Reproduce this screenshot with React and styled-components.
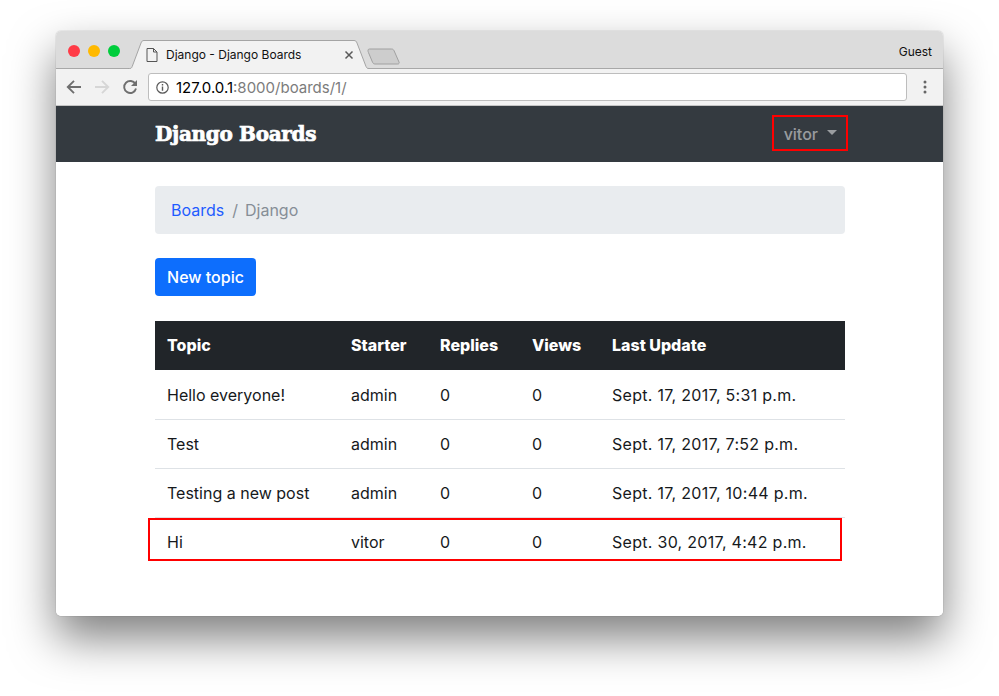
import React from "react";
import styled, { createGlobalStyle } from "styled-components";

const Global = createGlobalStyle`
  html, body { margin: 0; background: #fff; }
  body { font-family: Inter, "Liberation Sans", sans-serif; overflow: hidden; }
  #root { padding: 31px 56px 0; width: 887px; height: 665px; }
`;

const Window = styled.div`
  width: 887px;
  height: 585px;
  border-radius: 5px;
  background: #fff;
  overflow: hidden;
`;
const WindowShadow = styled.div`
  width: 887px;
  height: 585px;
  border-radius: 5px;
  box-shadow: 0 22px 45px rgba(0, 0, 0, 0.5), 0 0 1px rgba(0, 0, 0, 0.5);
`;
const TitleBar = styled.div`
  height: 37px;
  background: #dcdcdc;
  border-bottom: 1px solid #a8a8a8;
  display: flex;
  align-items: flex-start;
  position: relative;
`;
const Lights = styled.div`
  display: flex;
  gap: 8px;
  padding: 14px 0 0 12px;
  width: 60px;
`;
const Light = styled.span`
  width: 12px;
  height: 12px;
  border-radius: 50%;
  background: ${(p) => p.$c};
`;
const Tab = styled.div`
  position: relative;
  width: 242px;
  height: 29px;
  margin-top: 9px;
  display: flex;
  align-items: center;
  padding: 0 0 0 18px;
  box-sizing: border-box;
  flex: none;
`;
const TabShape = styled.svg`
  position: absolute;
  left: 0;
  top: 0;
`;
const TabIcon = styled.svg`
  position: relative;
  flex: none;
  margin-right: 8px;
`;
const TabTitle = styled.span`
  position: relative;
  font-size: 12px;
  color: #111;
  width: 178px;
  white-space: nowrap;
`;
const TabClose = styled.svg`
  position: relative;
  flex: none;
`;
const NewTab = styled.svg`
  flex: none;
  margin: 17px 0 0 -3px;
`;
const Guest = styled.span`
  margin: 13px 11px 0 auto;
  font-size: 12px;
  color: #111;
`;
const ToolBar = styled.div`
  height: 36px;
  background: #f2f2f2;
  border-bottom: 1px solid #c4c4c4;
  display: flex;
  align-items: center;
`;
const NavIcons = styled.div`
  display: flex;
  align-items: center;
  gap: 12px;
  padding-left: 10px;
  width: 82px;
  flex: none;
`;
const AddressBar = styled.div`
  width: 759px;
  height: 28px;
  background: #fff;
  border: 1px solid #bdbdbd;
  border-radius: 3px;
  display: flex;
  align-items: center;
  padding-left: 7px;
  gap: 7px;
  flex: none;
  font-size: 15px;
  box-sizing: border-box;
`;
const Host = styled.span`
  color: #000;
`;
const Path = styled.span`
  color: #7c7c7c;
`;
const Kebab = styled.svg`
  margin-left: 16px;
  flex: none;
`;
const Navbar = styled.nav`
  height: 56px;
  background: #343a40;
  display: flex;
  align-items: center;
  justify-content: space-between;
  padding: 0 95px 0 99px;
`;
const Brand = styled.span`
  font-family: "DejaVu Serif", serif;
  font-weight: 700;
  font-size: 20px;
  letter-spacing: -0.33px;
  color: #fff;
  -webkit-text-stroke: 0.7px #fff;
`;
const UserMenu = styled.div`
  position: relative;
  display: flex;
  align-items: center;
  gap: 9px;
  font-size: 16px;
  font-weight: 500;
  color: rgba(255, 255, 255, 0.5);
  padding-right: 11px;
  margin-top: -1px;
`;
const Caret = styled.span`
  width: 0;
  height: 0;
  border-top: 5px solid rgba(255, 255, 255, 0.5);
  border-left: 5px solid transparent;
  border-right: 5px solid transparent;
  margin-top: -2px;
`;
const UserHighlight = styled.span`
  position: absolute;
  left: -12px;
  top: -9px;
  width: 76px;
  height: 36px;
  border: 2px solid #f00;
  box-sizing: border-box;
`;
const Main = styled.main`
  padding: 24px 98px 0 99px;
`;
const Crumbs = styled.div`
  height: 48px;
  background: #e9ecef;
  border-radius: 4px;
  display: flex;
  align-items: center;
  padding: 0 16px;
  font-size: 16px;
`;
const CrumbLink = styled.a`
  color: #1f5cff;
`;
const CrumbSep = styled.span`
  color: #868e96;
  padding: 0 7px 0 8px;
`;
const CrumbCurrent = styled.span`
  color: #868e96;
`;
const PrimaryButton = styled.button`
  display: block;
  margin: 24px 0 25px;
  width: 101px;
  height: 38px;
  padding: 0;
  border: 0;
  border-radius: 4px;
  background: #0d6efd;
  color: #fff;
  font: 500 16px Inter, sans-serif;
`;
const TableWrap = styled.div`
  position: relative;
`;
const Table = styled.table`
  width: 690px;
  border-collapse: collapse;
  table-layout: fixed;
  font-size: 16px;
  color: #16191c;
`;
const Th = styled.th`
  width: ${(p) => p.$w}px;
  height: 49px;
  padding: 0 12px 2px;
  background: #212529;
  color: #fff;
  font-weight: 800;
  text-align: left;
  box-sizing: border-box;
`;
const Td = styled.td`
  height: 49px;
  padding: 0 12px;
  box-sizing: border-box;
  white-space: nowrap;
  letter-spacing: ${(p) => (p.$date ? "0.29px" : "0")};
`;
const Tr = styled.tr`
  &:first-child td {
    padding-top: 2px;
  }
  & + & {
    border-top: 1px solid #dee2e6;
  }
`;
const RowHighlight = styled.div`
  position: absolute;
  left: -7px;
  bottom: 5px;
  width: 694px;
  height: 43px;
  border: 2px solid #f00;
  box-sizing: border-box;
`;

const columns = [
  ["Topic", 184],
  ["Starter", 89],
  ["Replies", 92],
  ["Views", 80],
  ["Last Update", 245],
];
const rows = [
  ["Hello everyone!", "admin", "0", "0", "Sept. 17, 2017, 5:31 p.m."],
  ["Test", "admin", "0", "0", "Sept. 17, 2017, 7:52 p.m."],
  ["Testing a new post", "admin", "0", "0", "Sept. 17, 2017, 10:44 p.m."],
  ["Hi", "vitor", "0", "0", "Sept. 30, 2017, 4:42 p.m."],
];

export default function App() {
  return (
    <>
      <Global />
      <WindowShadow>
        <Window>
          <TitleBar>
            <Lights>
              <Light $c="#ff3b47" />
              <Light $c="#ffb900" />
              <Light $c="#00cd3c" />
            </Lights>
            <Tab>
              <TabShape width="242" height="29" viewBox="0 0 242 29">
                <path d="M0 28.5H1.5C3 28.5 3.6 28 4.2 26.5L13 3C13.6 1.3 14.4.5 16 .5H226C227.6.5 228.4 1.3 229 3L238 26.5C238.6 28 239.4 28.5 241 28.5H242V30H0Z" fill="#f2f2f2" stroke="#a4a4a4" />
              </TabShape>
              <TabIcon width="12" height="14" viewBox="0 0 12 14" fill="none" stroke="#555" strokeWidth="1">
                <path d="M1 .5H7.5L11 4V13.5H1ZM7.5 .5V4H11" />
              </TabIcon>
              <TabTitle>Django - Django Boards</TabTitle>
              <TabClose width="10" height="10" viewBox="0 0 10 10" stroke="#5a5a5a" strokeWidth="1.5">
                <path d="M1.5 1.5L8.5 8.5M8.5 1.5L1.5 8.5" />
              </TabClose>
            </Tab>
            <NewTab width="34" height="17" viewBox="0 0 34 17">
              <path d="M1 2.5C1 1.4 1.7 1 2.6 1H24.5C25.8 1 26.4 1.5 27 2.6L32 14C32.5 15 32 16 30.8 16H8C6.8 16 6.2 15.5 5.6 14.4L1.4 4.4C1.1 3.7 1 3.1 1 2.5Z" fill="#cdcdcd" stroke="#a0a0a0" />
            </NewTab>
            <Guest>Guest</Guest>
          </TitleBar>
          <ToolBar>
            <NavIcons>
              <svg width="16" height="16" viewBox="0 0 16 16" fill="none" stroke="#6f6f6f" strokeWidth="1.9">
                <path d="M15 8H2M8 1.8L1.8 8L8 14.2" />
              </svg>
              <svg width="16" height="16" viewBox="0 0 16 16" fill="none" stroke="#d6d6d6" strokeWidth="1.9">
                <path d="M1 8H14M8 1.8L14.2 8L8 14.2" />
              </svg>
              <svg width="16" height="16" viewBox="0 0 16 16" fill="none">
                <path d="M13.4 5A6 6 0 1 0 14 9.5" stroke="#6f6f6f" strokeWidth="1.9" />
                <path d="M15 1V7H9Z" fill="#6f6f6f" />
              </svg>
            </NavIcons>
            <AddressBar>
              <svg width="13" height="13" viewBox="0 0 13 13" fill="none" stroke="#5a5a5a" strokeWidth="1.2">
                <circle cx="6.5" cy="6.5" r="5.7" />
                <path d="M6.5 5.6V9.8M6.5 3V4.4" strokeWidth="1.4" />
              </svg>
              <span>
                <Host>127.0.0.1</Host>
                <Path>:8000/boards/1/</Path>
              </span>
            </AddressBar>
            <Kebab width="4" height="14" viewBox="0 0 4 14" fill="#666">
              <circle cx="2" cy="2" r="1.5" />
              <circle cx="2" cy="7" r="1.5" />
              <circle cx="2" cy="12" r="1.5" />
            </Kebab>
          </ToolBar>
          <Navbar>
            <Brand>Django Boards</Brand>
            <UserMenu>
              vitor
              <Caret />
              <UserHighlight />
            </UserMenu>
          </Navbar>
          <Main>
            <Crumbs>
              <CrumbLink>Boards</CrumbLink>
              <CrumbSep>/</CrumbSep>
              <CrumbCurrent>Django</CrumbCurrent>
            </Crumbs>
            <PrimaryButton>New topic</PrimaryButton>
            <TableWrap>
              <Table>
                <thead>
                  <tr>
                    {columns.map(([label, w]) => (
                      <Th key={label} $w={w}>{label}</Th>
                    ))}
                  </tr>
                </thead>
                <tbody>
                  {rows.map((row) => (
                    <Tr key={row[0]}>
                      {row.map((cell, i) => (
                        <Td key={i} $date={i === 4}>{cell}</Td>
                      ))}
                    </Tr>
                  ))}
                </tbody>
              </Table>
              <RowHighlight />
            </TableWrap>
          </Main>
        </Window>
      </WindowShadow>
    </>
  );
}
